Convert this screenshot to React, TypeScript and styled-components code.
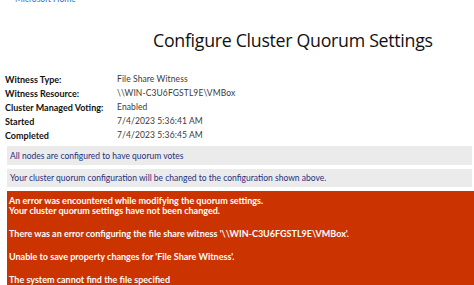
import { Fragment } from 'react'
import styled, { createGlobalStyle } from 'styled-components'

const GlobalStyle = createGlobalStyle`
  html, body {
    margin: 0;
    padding: 0;
    background: #ffffff;
    overflow: hidden;
  }
  body {
    font-family: Lato, "Open Sans", "Liberation Sans", sans-serif;
  }
`

const Page = styled.div`
  width: 474px;
  height: 285px;
  overflow: hidden;
  display: flex;
  flex-direction: column;
`

const HomeLink = styled.a`
  display: block;
  margin: -7px 0 0 15px;
  height: 12px;
  font-size: 8.5px;
  line-height: 12px;
  color: #2b6fd6;
  text-decoration: none;
`

const Title = styled.h1`
  margin: 23px 0 0 153px;
  font-family: "Open Sans", Lato, sans-serif;
  font-size: 17.8px;
  line-height: 24px;
  font-weight: 400;
  color: #111111;
  letter-spacing: -0.3px;
  white-space: nowrap;
`

const Properties = styled.dl`
  margin: 20px 0 0 5px;
  display: grid;
  grid-template-columns: 112px auto;
  grid-auto-rows: 14px;
  align-items: center;
  white-space: nowrap;
`

const Label = styled.dt`
  font-size: 9px;
  font-weight: 700;
  color: #111111;
`

const Value = styled.dd`
  margin: 0;
  font-size: 8.5px;
  color: #3a3a3a;
  letter-spacing: 0.1px;
`

const Notice = styled.div<{ $first?: boolean }>`
  margin: ${p => (p.$first ? '4px' : '4px')} 2px 0 7px;
  height: ${p => (p.$first ? '19px' : '18px')};
  padding-left: 3px;
  display: flex;
  align-items: center;
  background: #ebebeb;
  color: #26307c;
  font-size: 8.5px;
  white-space: nowrap;
`

const ErrorPanel = styled.div`
  margin: 4px 0 0 7px;
  flex: 1;
  background: #cb3400;
  color: #ffffff;
  padding: 5px 0 0 2px;
  font-size: 9px;
  font-weight: 700;
  line-height: 10px;
  display: flex;
  flex-direction: column;
  gap: 13px;
  white-space: nowrap;
`

const ErrorText = styled.p`
  margin: 0;
`

const props: [string, string][] = [
  ['Witness Type:', 'File Share Witness'],
  ['Witness Resource:', '\\\\WIN-C3U6FGSTL9E\\VMBox'],
  ['Cluster Managed Voting:', 'Enabled'],
  ['Started', '7/4/2023 5:36:41 AM'],
  ['Completed', '7/4/2023 5:36:45 AM'],
]

export default function App() {
  return (
    <Page>
      <GlobalStyle />
      <HomeLink href="#">Microsoft Home</HomeLink>
      <Title>Configure Cluster Quorum Settings</Title>
      <Properties>
        {props.map(([k, v]) => (
          <Fragment key={k}>
            <Label>{k}</Label>
            <Value>{v}</Value>
          </Fragment>
        ))}
      </Properties>
      <Notice $first>All nodes are configured to have quorum votes</Notice>
      <Notice>Your cluster quorum configuration will be changed to the configuration shown above.</Notice>
      <ErrorPanel>
        <ErrorText>
          An error was encountered while modifying the quorum settings.
          <br />
          Your cluster quorum settings have not been changed.
        </ErrorText>
        <ErrorText>There was an error configuring the file share witness '\\WIN-C3U6FGSTL9E\VMBox'.</ErrorText>
        <ErrorText>Unable to save property changes for 'File Share Witness'.</ErrorText>
        <ErrorText>The system cannot find the file specified</ErrorText>
      </ErrorPanel>
    </Page>
  )
}
